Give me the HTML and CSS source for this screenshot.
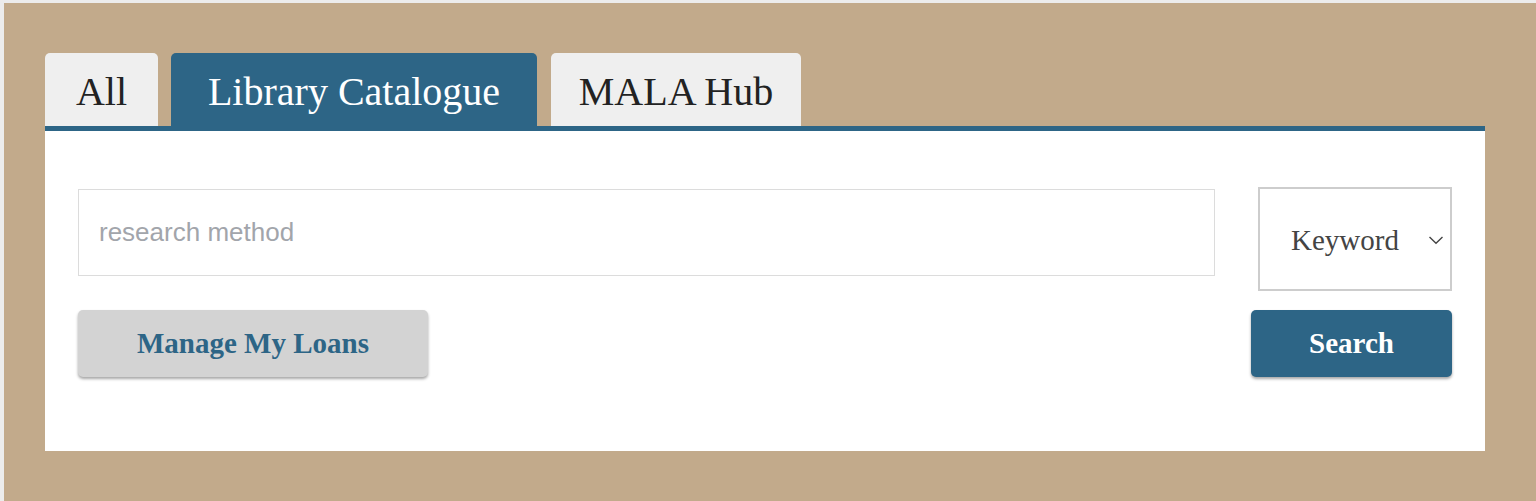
FILE: index.html
```html
<!DOCTYPE html>
<html lang="en">
<head>
<meta charset="utf-8">
<title>Library Search</title>
<link rel="stylesheet" href="styles.css">
</head>
<body>
<div class="frame">
  <div class="widget">
    <div class="tabs">
      <div class="tab tab-all">All</div>
      <div class="tab tab-active tab-lib">Library Catalogue</div>
      <div class="tab tab-mala">MALA Hub</div>
    </div>
    <div class="panel">
      <div class="row row-top">
        <input class="query" type="text" placeholder="research method">
        <div class="select">
          <span class="select-label">Keyword</span>
          <svg class="chevron" width="16" height="10" viewBox="0 0 16 10"><path d="M1.5 2 L8 8.2 L14.5 2" fill="none" stroke="#444" stroke-width="1.4"/></svg>
        </div>
      </div>
      <div class="row row-bottom">
        <button class="btn btn-loans">Manage My Loans</button>
        <button class="btn btn-search">Search</button>
      </div>
    </div>
  </div>
</div>
</body>
</html>
```
FILE: styles.css
```css
html, body {
  margin: 0;
  padding: 0;
  background: #c2aa8b;
}
.frame {
  height: 501px;
  box-sizing: border-box;
  border-top: 3px solid #ececec;
  border-left: 4px solid #ececec;
  background: #c2aa8b;
  padding: 50px 0 0 41px;
}
.widget {
  width: 1440px;
}
.tabs {
  display: flex;
  align-items: flex-end;
  height: 73px;
}
.tab {
  height: 73px;
  box-sizing: border-box;
  display: flex;
  align-items: center;
  justify-content: center;
  background: #efefef;
  color: #222;
  border-radius: 5px 5px 0 0;
  font-family: "Liberation Serif", "Times New Roman", serif;
  font-size: 40px;
  padding-top: 4px;
}
.tab-all { width: 113px; margin-right: 13px; }
.tab-lib { width: 366px; margin-right: 14px; }
.tab-mala { width: 250px; }
.tab-active {
  background: #2d6586;
  color: #fff;
}
.panel {
  background: #fff;
  border-top: 5px solid #2d6586;
  height: 320px;
  box-sizing: content-box;
  padding: 0 33px;
}
.row {
  display: flex;
  justify-content: space-between;
}
.row-top {
  padding-top: 56px;
  align-items: flex-start;
}
.query {
  width: 1137px;
  height: 87px;
  margin-top: 2px;
  box-sizing: border-box;
  border: 1px solid #dcdcdc;
  padding: 0 20px;
  font-family: "Liberation Sans", Arial, sans-serif;
  font-size: 26px;
  color: #333;
  outline: none;
}
.query::placeholder {
  color: #a2a5ab;
}
.select {
  width: 194px;
  height: 104px;
  box-sizing: border-box;
  border: 2px solid #cdcdcd;
  display: flex;
  align-items: center;
  padding: 0 6px 0 31px;
  justify-content: space-between;
}
.select-label {
  font-family: "Liberation Serif", "Times New Roman", serif;
  font-size: 29px;
  color: #444;
  padding-top: 2px;
}
.chevron {
  margin-top: 2px;
}
.row-bottom {
  margin-top: 19px;
}
.btn {
  height: 67px;
  border: none;
  border-radius: 5px;
  box-shadow: 0 2px 3px rgba(0,0,0,0.35);
  font-family: "Liberation Serif", "Times New Roman", serif;
  font-weight: bold;
  font-size: 29px;
  padding: 0;
  cursor: pointer;
}
.btn-loans {
  width: 350px;
  background: #d3d3d3;
  color: #2d6586;
}
.btn-search {
  width: 201px;
  background: #2d6586;
  color: #fff;
}
```
